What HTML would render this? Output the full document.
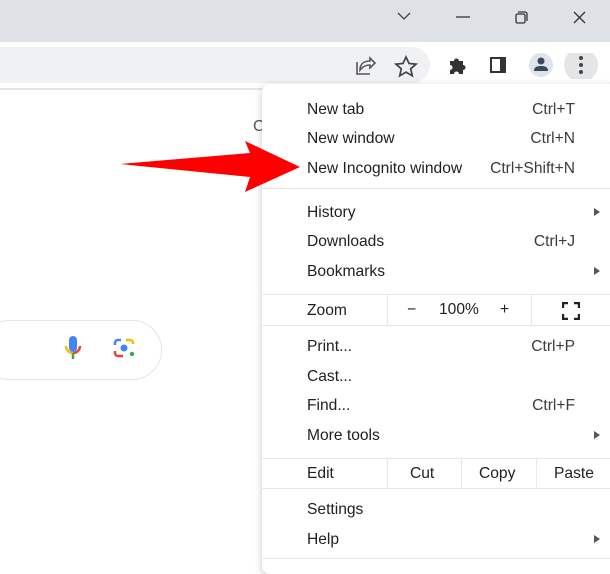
<!DOCTYPE html>
<html><head><style>
*{margin:0;padding:0;box-sizing:border-box}
body{width:610px;height:565px;overflow:hidden;background:#fff;font-family:"Liberation Sans",sans-serif;position:relative;color:#202124}
.a{position:absolute}
.t{position:absolute;font-size:15.6px;color:#202124;white-space:nowrap}
.r{position:absolute;font-size:15.6px;color:#3c3c3c;white-space:nowrap;right:35px}
.sep{position:absolute;left:262px;right:0;height:1px;background:#e8e8e8}
.tri{position:absolute;right:10px;width:0;height:0;border-left:6px solid #555;border-top:4.5px solid transparent;border-bottom:4.5px solid transparent}
</style></head><body>
<div class="a" style="left:0;top:0;width:610px;height:42px;background:#dee1e6"></div>
<svg class="a" style="left:390px;top:10px" width="200" height="16">
<path d="M8 3l6 6 6-6" stroke="#444" stroke-width="1.3" fill="none"/>
<path d="M66 7h14" stroke="#333" stroke-width="1.3"/>
<rect x="126" y="4" width="9" height="9" rx="1.5" stroke="#333" fill="none" stroke-width="1.3"/>
<path d="M128 2h7a2 2 0 0 1 2 2v7" stroke="#333" fill="none" stroke-width="1.3"/>
<path d="M184 2l11 11M195 2l-11 11" stroke="#333" stroke-width="1.3"/>
</svg>
<div class="a" style="left:0;top:42px;width:610px;height:46px;background:#fff"></div>
<div class="a" style="left:-20px;top:47px;width:450px;height:36px;background:#f0f1f3;border-radius:18px"></div>
<div class="a" style="left:0;top:88px;width:610px;height:2px;background:#e3e3e3"></div>
<svg class="a" style="left:354px;top:53px" width="260" height="26">
<path d="M3 9v12h13M6 17c0-6 4-9 10-9V5l5 5-5 5v-3c-4 0-7 1-10 5z" stroke="#555" stroke-width="1.6" fill="none"/>
<path d="M52 4l3 6.5 7 .7-5.3 4.6 1.6 7-6.3-3.7-6.3 3.7 1.6-7-5.3-4.6 7-.7z" stroke="#444" stroke-width="1.7" fill="none"/>
<path d="M96 8h4a2.5 2.5 0 0 1 5 0h4v4a2.5 2.5 0 0 1 0 5v4h-4a2.5 2.5 0 0 0-5 0h-4v-4a2.5 2.5 0 0 0 0-5z" fill="#333"/>
<rect x="136" y="4" width="16" height="16" fill="#333"/><rect x="138" y="6" width="8" height="12" fill="#fff"/>
<circle cx="187" cy="12" r="12" fill="#dfe3ea"/><circle cx="187" cy="8" r="3.5" fill="#3c4859"/><path d="M180 18c0-4 3-5 7-5s7 1 7 5z" fill="#3c4859"/>
<circle cx="227" cy="12" r="17" fill="#e4e5e7"/>
<circle cx="227" cy="5" r="2" fill="#444"/><circle cx="227" cy="12" r="2" fill="#444"/><circle cx="227" cy="19" r="2" fill="#444"/>
</svg>
<div class="a" style="left:-20px;top:320px;width:182px;height:60px;border:1px solid #e5e5e5;border-radius:30px"></div>
<svg class="a" style="left:60px;top:334px" width="90" height="30">
<rect x="9" y="2" width="8" height="16" rx="4" fill="#4285f4"/>
<path d="M6 12a7 7 0 0 0 7 7" stroke="#fbbc04" stroke-width="2.5" fill="none"/>
<path d="M13 19a7 7 0 0 0 7-7" stroke="#ea4335" stroke-width="2.5" fill="none"/>
<path d="M13 19v6" stroke="#34a853" stroke-width="2.5"/>
<path d="M55 11v-2a3 3 0 0 1 3-3h3" stroke="#4285f4" stroke-width="2.5" fill="none"/>
<path d="M66 6h4a3 3 0 0 1 3 3v1" stroke="#fbbc04" stroke-width="2.5" fill="none"/>
<path d="M55 17v2a3 3 0 0 0 3 3h5" stroke="#ea4335" stroke-width="2.5" fill="none"/>
<circle cx="64" cy="14" r="3.5" fill="#4285f4"/><circle cx="72" cy="20" r="2.2" fill="#34a853"/>
</svg>
<div class="a" style="left:253px;top:118px;font-size:16px;color:#555">C</div>
<div class="a" style="left:262px;top:84px;width:360px;height:490px;background:#fff;border-radius:8px;box-shadow:0 2px 8px rgba(0,0,0,.22)"></div>
<div class="t" style="left:307px;top:101px">New tab</div><div class="r" style="top:101px">Ctrl+T</div>
<div class="t" style="left:307px;top:130px">New window</div><div class="r" style="top:130px">Ctrl+N</div>
<div class="t" style="left:307px;top:160px">New Incognito window</div><div class="r" style="top:160px">Ctrl+Shift+N</div>
<div class="sep" style="top:188px"></div>
<div class="t" style="left:307px;top:204px">History</div><div class="tri" style="top:208px"></div>
<div class="t" style="left:307px;top:233px">Downloads</div><div class="r" style="top:233px">Ctrl+J</div>
<div class="t" style="left:307px;top:263px">Bookmarks</div><div class="tri" style="top:267px"></div>
<div class="sep" style="top:294px"></div>
<div class="t" style="left:307px;top:302px">Zoom</div>
<div class="a" style="left:387px;top:294px;width:1px;height:31px;background:#e8e8e8"></div>
<div class="t" style="left:407px;top:301px">−</div>
<div class="t" style="left:439px;top:301px">100%</div>
<div class="t" style="left:500px;top:301px">+</div>
<div class="a" style="left:531px;top:294px;width:1px;height:31px;background:#e8e8e8"></div>
<svg class="a" style="left:562px;top:302px" width="18" height="18"><path d="M1 6V1h5M12 1h5v5M17 12v5h-5M6 17H1v-5" stroke="#222" stroke-width="2.4" fill="none"/></svg>
<div class="sep" style="top:325px"></div>
<div class="t" style="left:307px;top:338px">Print...</div><div class="r" style="top:338px">Ctrl+P</div>
<div class="t" style="left:307px;top:368px">Cast...</div>
<div class="t" style="left:307px;top:397px">Find...</div><div class="r" style="top:397px">Ctrl+F</div>
<div class="t" style="left:307px;top:427px">More tools</div><div class="tri" style="top:431px"></div>
<div class="sep" style="top:458px"></div>
<div class="t" style="left:307px;top:465px">Edit</div>
<div class="a" style="left:387px;top:458px;width:1px;height:30px;background:#e8e8e8"></div>
<div class="t" style="left:410px;top:465px">Cut</div>
<div class="a" style="left:461px;top:458px;width:1px;height:30px;background:#e8e8e8"></div>
<div class="t" style="left:479px;top:465px">Copy</div>
<div class="a" style="left:536px;top:458px;width:1px;height:30px;background:#e8e8e8"></div>
<div class="t" style="left:554px;top:465px">Paste</div>
<div class="sep" style="top:488px"></div>
<div class="t" style="left:307px;top:501px">Settings</div>
<div class="t" style="left:307px;top:531px">Help</div><div class="tri" style="top:535px"></div>
<div class="sep" style="top:558px"></div>
<svg class="a" style="left:0;top:0" width="610" height="565"><polygon points="120,164 250,153 245,141 300,167 245,192 250,177" fill="#f00"/></svg>
</body></html>
